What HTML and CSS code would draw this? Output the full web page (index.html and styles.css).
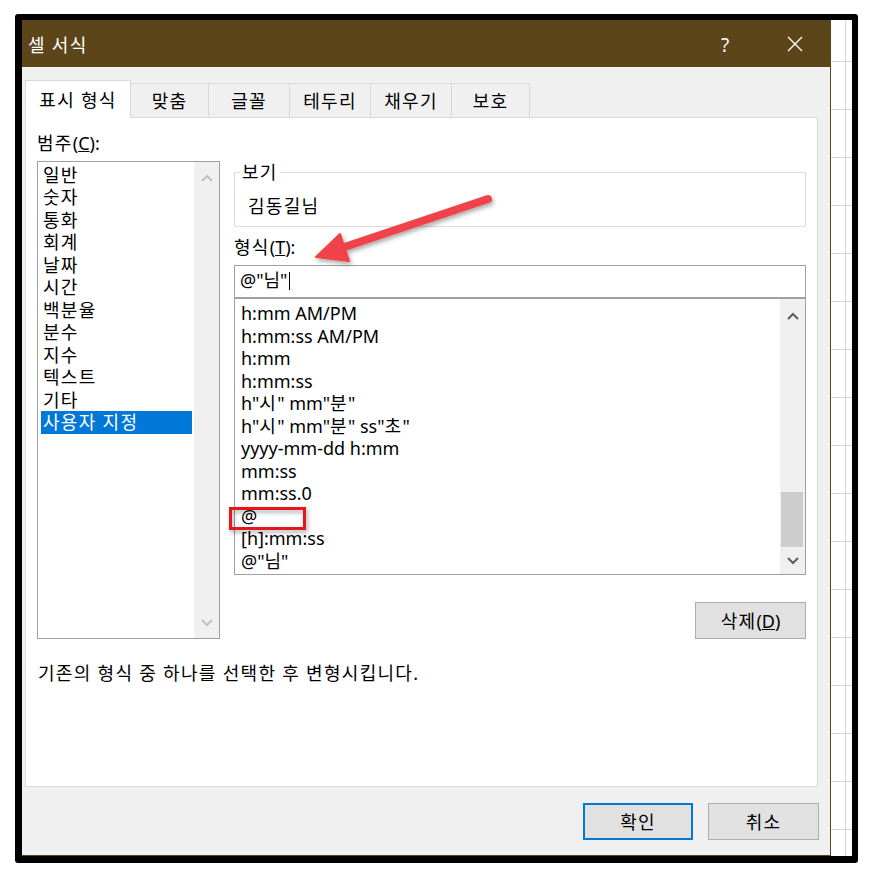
FILE: index.html
```html
<!DOCTYPE html>
<html lang="ko">
<head>
<meta charset="utf-8">
<title>셀 서식</title>
<link rel="stylesheet" href="styles.css">
</head>
<body>
<div class="frame">
  <div class="dialog">
    <div class="titlebar">
      <span class="title ko">셀 서식</span>
      <span class="help">?</span>
      <span class="close"><svg width="16" height="16" viewBox="0 0 16 16"><path d="M1 1 L15 15 M15 1 L1 15" stroke="#fff" stroke-width="1.4" fill="none"/></svg></span>
    </div>
    <div class="body">
      <div class="tabs">
        <div class="tab active w106"><span class="ko">표시 형식</span></div>
        <div class="tab w78"><span class="ko">맞춤</span></div>
        <div class="tab w81"><span class="ko">글꼴</span></div>
        <div class="tab w81"><span class="ko">테두리</span></div>
        <div class="tab w81"><span class="ko">채우기</span></div>
        <div class="tab w78"><span class="ko">보호</span></div>
      </div>
      <div class="panel">
        <div class="cols">
          <div class="leftcol">
            <div class="label"><span class="ko">범주</span>(<u>C</u>):</div>
            <div class="listbox cat">
              <ul class="items ko">
                <li>일반</li>
                <li>숫자</li>
                <li>통화</li>
                <li>회계</li>
                <li>날짜</li>
                <li>시간</li>
                <li>백분율</li>
                <li>분수</li>
                <li>지수</li>
                <li>텍스트</li>
                <li>기타</li>
                <li class="sel">사용자 지정</li>
              </ul>
              <div class="sb">
                <div class="arrow up"><svg width="12" height="8" viewBox="0 0 12 8"><path d="M1 7 L6 2 L11 7" stroke="#c2c2c2" stroke-width="2.2" fill="none"/></svg></div>
                <div class="track"></div>
                <div class="arrow down"><svg width="12" height="8" viewBox="0 0 12 8"><path d="M1 1 L6 6 L11 1" stroke="#c2c2c2" stroke-width="2.2" fill="none"/></svg></div>
              </div>
            </div>
          </div>
          <div class="rightcol">
            <fieldset class="sample">
              <legend class="ko">보기</legend>
              <div class="value ko">김동길님</div>
            </fieldset>
            <div class="label fmtlabel"><span class="ko">형식</span>(<u>T</u>):</div>
            <div class="input">@"님"<span class="caret"></span></div>
            <div class="listbox fmt">
              <ul class="items">
                <li>h:mm AM/PM</li>
                <li>h:mm:ss AM/PM</li>
                <li>h:mm</li>
                <li>h:mm:ss</li>
                <li>h"<span class="ko">시</span>" mm"<span class="ko">분</span>"</li>
                <li>h"<span class="ko">시</span>" mm"<span class="ko">분</span>" ss"<span class="ko">초</span>"</li>
                <li>yyyy-mm-dd h:mm</li>
                <li>mm:ss</li>
                <li>mm:ss.0</li>
                <li>@</li>
                <li>[h]:mm:ss</li>
                <li>@"님"</li>
              </ul>
              <div class="sb">
                <div class="arrow up"><svg width="12" height="8" viewBox="0 0 12 8"><path d="M1 7 L6 2 L11 7" stroke="#606060" stroke-width="2.2" fill="none"/></svg></div>
                <div class="track"><div class="thumb"></div></div>
                <div class="arrow down"><svg width="12" height="8" viewBox="0 0 12 8"><path d="M1 1 L6 6 L11 1" stroke="#606060" stroke-width="2.2" fill="none"/></svg></div>
              </div>
            </div>
            <div class="delrow"><button class="btn del"><span class="ko">삭제</span>(<u>D</u>)</button></div>
          </div>
        </div>
        <div class="desc ko">기존의 형식 중 하나를 선택한 후 변형시킵니다.</div>
      </div>
      <div class="buttons">
        <button class="btn ok"><span class="ko">확인</span></button>
        <button class="btn cancel"><span class="ko">취소</span></button>
      </div>
    </div>
  </div>
  <div class="grid"></div>
</div>
<svg class="annot" width="872" height="878" viewBox="0 0 872 878">
  <defs>
    <filter id="sh" x="-20%" y="-40%" width="140%" height="180%">
      <feDropShadow dx="1.5" dy="2.5" stdDeviation="2" flood-color="#000" flood-opacity="0.35"/>
    </filter>
  </defs>
  <g filter="url(#sh)">
    <line x1="488" y1="199" x2="340" y2="248.5" stroke="#ef4249" stroke-width="8" stroke-linecap="round"/>
    <polygon points="316,257 340,234 349,261" fill="#ef4249" stroke="#ef4249" stroke-width="2" stroke-linejoin="round"/>
  </g>
  <rect x="230.5" y="508.5" width="74" height="20" fill="none" stroke="#e5141d" stroke-width="3" filter="url(#sh)"/>
</svg>
</body>
</html>
```

FILE: styles.css
```css
* { box-sizing: border-box; }

body {
  margin: 0;
  background: #fff;
  font-family: "Noto Sans", "Noto Sans CJK KR", sans-serif;
  font-size: 18px;
  color: #000;
}

.ko { letter-spacing: 1.3px; }

.frame {
  margin: 14px 0 0 15px;
  width: 843px;
  height: 849px;
  border: solid #000;
  border-width: 6px 6px 7px 7px;
  border-radius: 3px;
  display: flex;
  background: #fff;
}

.dialog {
  width: 809px;
  height: 836px;
  flex: none;
  background: #f0f0f0;
  border-right: 1px solid #5c4519;
  border-bottom: 1px solid #5c4519;
  display: flex;
  flex-direction: column;
}

.titlebar {
  height: 47px;
  flex: none;
  background: #5c4519;
  color: #fff;
  display: flex;
  align-items: center;
}

.title {
  flex: 1;
  padding-left: 6px;
  padding-top: 2px;
  line-height: 22px;
}

.help {
  width: 70px;
  text-align: center;
  font-size: 19px;
  line-height: 22px;
  padding-top: 2px;
}

.close {
  width: 70px;
  height: 47px;
  display: flex;
  align-items: center;
  justify-content: center;
}

.body {
  flex: 1;
  padding: 13px 12px 0 3px;
}

.tabs {
  display: flex;
  align-items: flex-end;
  height: 37px;
}

.tab {
  height: 34px;
  border-top: 1px solid #d9d9d9;
  border-right: 1px solid #d9d9d9;
  background: #f0f0f0;
  display: flex;
  align-items: center;
  justify-content: center;
  line-height: 22px;
}

.tab.active {
  height: 38px;
  margin-bottom: -1px;
  border-left: 1px solid #d9d9d9;
  background: #fff;
  position: relative;
  z-index: 1;
}

.w106 { width: 106px; }
.w78 { width: 78px; }
.w81 { width: 81px; }

.panel {
  height: 670px;
  background: #fff;
  border: 1px solid #d9d9d9;
  padding: 14px 11px 0;
}

.cols {
  display: flex;
  gap: 14px;
}

.leftcol { width: 183px; }

.rightcol {
  width: 572px;
  padding-top: 29px;
}

.label { line-height: 22px; }

.listbox {
  border: 1px solid #a0a0a0;
  background: #fff;
  display: flex;
  overflow: hidden;
}

.items {
  flex: 1;
  list-style: none;
  margin: 0;
  line-height: 22.5px;
  overflow: hidden;
  white-space: nowrap;
}

.cat {
  margin-top: 7px;
  height: 478px;
}

.cat .items { padding: 1.5px 2px 0 3px; }
.cat .items li { padding-left: 2px; }

.sel {
  background: #0078d7;
  color: #fff;
}

.sb {
  width: 25px;
  flex: none;
  background: #f0f0f0;
  display: flex;
  flex-direction: column;
}

.arrow {
  display: flex;
  align-items: center;
  justify-content: center;
  flex: none;
}

.track { flex: 1; }

.cat .up { height: 32px; }
.cat .down { height: 30px; }

.fmt { height: 277px; }
.fmt .items { padding: 3px 0 0 6px; }
.fmt .up { height: 34px; }
.fmt .down { height: 27px; }

.thumb {
  margin: 159px 2px 0 1px;
  height: 55px;
  background: #cdcdcd;
}

.sample {
  margin: 0;
  min-width: 0;
  border: 1px solid #dcdcdc;
  padding: 12px 13px 9px;
}

.sample legend {
  padding: 0 2px;
  margin-left: -8px;
  line-height: 22px;
}

.value { line-height: 22px; }

.fmtlabel { margin-top: 9px; }

.input {
  margin-top: 7px;
  height: 33px;
  border: 1px solid #a0a0a0;
  background: #fff;
  padding: 0 0 2px 5px;
  line-height: 29px;
}

.caret {
  display: inline-block;
  width: 1px;
  height: 18px;
  background: #000;
  margin-left: 2px;
  vertical-align: -3px;
}

.delrow {
  margin-top: 27px;
  display: flex;
  justify-content: flex-end;
}

.btn {
  height: 37px;
  padding: 0;
  background: #e1e1e1;
  border: 1px solid #adadad;
  font: inherit;
  line-height: 22px;
  color: #000;
}

.del { width: 111px; }
.ok { width: 110px; border: 2px solid #0078d7; }
.cancel { width: 111px; }

.desc {
  margin-top: 23px;
  padding-left: 1px;
  line-height: 22px;
}

.buttons {
  display: flex;
  justify-content: flex-end;
  gap: 15px;
  margin: 16px -1px 0 0;
}

.grid {
  flex: 1;
  background:
    linear-gradient(#d4d4d4, #d4d4d4) 14px 0 / 1px 100% no-repeat,
    repeating-linear-gradient(to bottom, transparent 0 41px, #d4d4d4 41px 42px, transparent 42px 48px);
}

.annot {
  position: absolute;
  left: 0;
  top: 0;
  pointer-events: none;
}
```
